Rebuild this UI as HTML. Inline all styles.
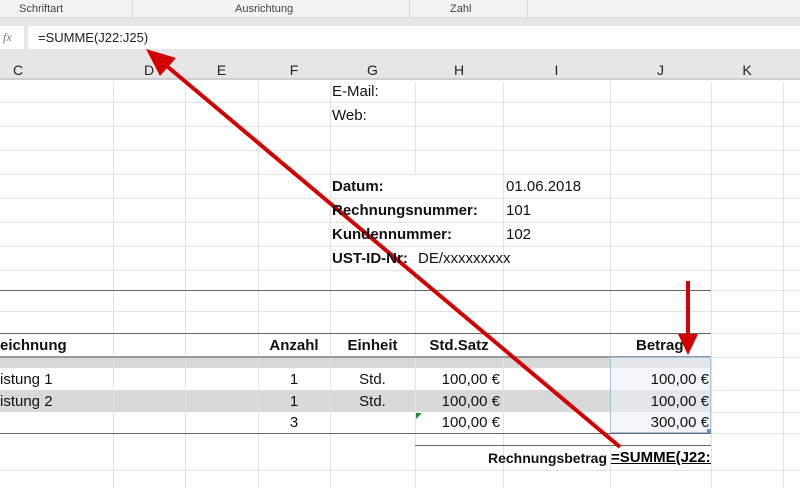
<!DOCTYPE html>
<html><head><meta charset="utf-8"><style>
*{margin:0;padding:0;box-sizing:border-box}
body{width:800px;height:488px;overflow:hidden;background:#fff;font-family:"Liberation Sans",sans-serif;position:relative}
.t{position:absolute;font-size:15px;color:#111;white-space:nowrap;line-height:16px}
.b{font-weight:bold}
.r{text-align:right}
.c{text-align:center}
.h{position:absolute;font-size:14px;color:#222;text-align:center;top:62px}
.rb{position:absolute;font-size:11px;color:#444;top:3px}
</style></head><body>
<div style="position:absolute;left:0;top:0;width:800px;height:18px;background:#f3f3f3;border-bottom:1px solid #ddd"></div>
<div style="position:absolute;left:0;top:18px;width:800px;height:40px;background:#e6e6e6"></div>
<div style="position:absolute;left:0;top:26px;width:24px;height:23px;background:#fff"></div>
<div style="position:absolute;left:28px;top:26px;width:772px;height:23px;background:#fff"></div>
<div style="position:absolute;left:0;top:58px;width:800px;height:22px;background:#e6e6e6;border-bottom:2px solid #cfcfcf"></div>
<div class="rb" style="left:19px">Schriftart</div>
<div class="rb" style="left:235px">Ausrichtung</div>
<div class="rb" style="left:450px">Zahl</div>
<div style="position:absolute;left:132px;top:0;width:1px;height:18px;background:#d8d8d8"></div>
<div style="position:absolute;left:409px;top:0;width:1px;height:18px;background:#d8d8d8"></div>
<div style="position:absolute;left:527px;top:0;width:1px;height:18px;background:#d8d8d8"></div>
<div style="position:absolute;left:3px;top:30px;font-size:12px;font-style:italic;color:#777;font-family:'Liberation Serif',serif">fx</div>
<div style="position:absolute;left:38px;top:30px;font-size:13px;color:#222">=SUMME(J22:J25)</div>
<div class="h" style="left:0;width:36px">C</div>
<div class="h" style="left:113px;width:72px">D</div>
<div class="h" style="left:185px;width:73px">E</div>
<div class="h" style="left:258px;width:72px">F</div>
<div class="h" style="left:330px;width:85px">G</div>
<div class="h" style="left:415px;width:88px">H</div>
<div class="h" style="left:503px;width:107px">I</div>
<div class="h" style="left:610px;width:101px">J</div>
<div class="h" style="left:711px;width:72px">K</div>
<svg style="position:absolute;left:0;top:0" width="800" height="488">
<rect x="0" y="357" width="711" height="11" fill="#d9d9d9"/>
<rect x="0" y="390" width="711" height="22" fill="#d9d9d9"/>
<rect x="610" y="357" width="101" height="76" fill="#e9eef6" opacity="0.6"/>
<g stroke="#e2e2e2" stroke-width="1">
<line x1="113.5" y1="82" x2="113.5" y2="488"/><line x1="185.5" y1="82" x2="185.5" y2="488"/>
<line x1="258.5" y1="82" x2="258.5" y2="488"/><line x1="330.5" y1="82" x2="330.5" y2="488"/>
<line x1="415.5" y1="82" x2="415.5" y2="174"/><line x1="415.5" y1="270" x2="415.5" y2="488"/>
<line x1="503.5" y1="82" x2="503.5" y2="488"/><line x1="610.5" y1="82" x2="610.5" y2="488"/>
<line x1="711.5" y1="82" x2="711.5" y2="488"/><line x1="783.5" y1="82" x2="783.5" y2="488"/>
<line x1="0" y1="102.5" x2="800" y2="102.5"/><line x1="0" y1="126.5" x2="800" y2="126.5"/>
<line x1="0" y1="150.5" x2="800" y2="150.5"/><line x1="0" y1="174.5" x2="800" y2="174.5"/>
<line x1="0" y1="198.5" x2="800" y2="198.5"/><line x1="0" y1="222.5" x2="800" y2="222.5"/>
<line x1="0" y1="246.5" x2="800" y2="246.5"/><line x1="0" y1="270.5" x2="800" y2="270.5"/>
<line x1="0" y1="311.5" x2="800" y2="311.5"/><line x1="0" y1="470.5" x2="800" y2="470.5"/>
<line x1="711" y1="290.5" x2="800" y2="290.5"/><line x1="711" y1="333.5" x2="800" y2="333.5"/>
<line x1="711" y1="357.5" x2="800" y2="357.5"/><line x1="711" y1="390.5" x2="800" y2="390.5"/>
<line x1="711" y1="412.5" x2="800" y2="412.5"/><line x1="711" y1="433.5" x2="800" y2="433.5"/>
</g>
<g stroke="#666" stroke-width="1">
<line x1="0" y1="290.5" x2="711" y2="290.5"/><line x1="0" y1="333.5" x2="711" y2="333.5"/>
<line x1="0" y1="433.5" x2="711" y2="433.5"/><line x1="415" y1="445.5" x2="711" y2="445.5"/>
</g>
<line x1="0" y1="357" x2="711" y2="357" stroke="#999" stroke-width="2"/>
<rect x="610.5" y="357.5" width="100" height="75" fill="none" stroke="#a9c1e0"/>
<rect x="707" y="429" width="4" height="4" fill="#6f93c8"/>
<polygon points="416,413 422,413 416,419" fill="#1e8c2e"/>
<g fill="#d40000" stroke="#d40000">
<line x1="620" y1="447" x2="162" y2="62" stroke-width="4"/>
<polygon points="146,49 176,58 160,76" stroke="none"/>
<line x1="688" y1="281" x2="688" y2="336" stroke-width="4"/>
<polygon points="678,334 698,334 688,355" stroke="none"/>
</g>
</svg>
<div class="t" style="left:332px;top:84px">E-Mail:</div>
<div class="t" style="left:332px;top:108px">Web:</div>
<div class="t b" style="left:332px;top:179px">Datum:</div>
<div class="t b" style="left:332px;top:203px">Rechnungsnummer:</div>
<div class="t b" style="left:332px;top:227px">Kundennummer:</div>
<div class="t b" style="left:332px;top:251px">UST-ID-Nr:</div>
<div class="t" style="left:418px;top:251px">DE/xxxxxxxxx</div>
<div class="t" style="left:506px;top:179px">01.06.2018</div>
<div class="t" style="left:506px;top:203px">101</div>
<div class="t" style="left:506px;top:227px">102</div>
<div class="t b" style="left:0;top:338px">eichnung</div>
<div class="t b c" style="left:258px;width:72px;top:338px">Anzahl</div>
<div class="t b c" style="left:330px;width:85px;top:338px">Einheit</div>
<div class="t b c" style="left:415px;width:88px;top:338px">Std.Satz</div>
<div class="t b" style="left:636px;top:338px">Betrag</div>
<div class="t" style="left:0;top:372px">istung 1</div>
<div class="t" style="left:0;top:394px">istung 2</div>
<div class="t c" style="left:258px;width:72px;top:372px">1</div>
<div class="t c" style="left:258px;width:72px;top:394px">1</div>
<div class="t c" style="left:258px;width:72px;top:415px">3</div>
<div class="t c" style="left:330px;width:85px;top:372px">Std.</div>
<div class="t c" style="left:330px;width:85px;top:394px">Std.</div>
<div class="t r" style="left:415px;width:85px;top:372px">100,00 €</div>
<div class="t r" style="left:415px;width:85px;top:394px">100,00 €</div>
<div class="t r" style="left:415px;width:85px;top:415px">100,00 €</div>
<div class="t r" style="left:610px;width:99px;top:372px">100,00 €</div>
<div class="t r" style="left:610px;width:99px;top:394px">100,00 €</div>
<div class="t r" style="left:610px;width:99px;top:415px">300,00 €</div>
<div class="t b" style="left:488px;top:450px;font-size:14px">Rechnungsbetrag</div>
<div style="position:absolute;left:611px;top:450px;width:100px;overflow:hidden;font-size:15px;font-weight:bold;line-height:16px;white-space:nowrap;text-decoration:underline double">=SUMME(J22:J25)</div>
</body></html>
